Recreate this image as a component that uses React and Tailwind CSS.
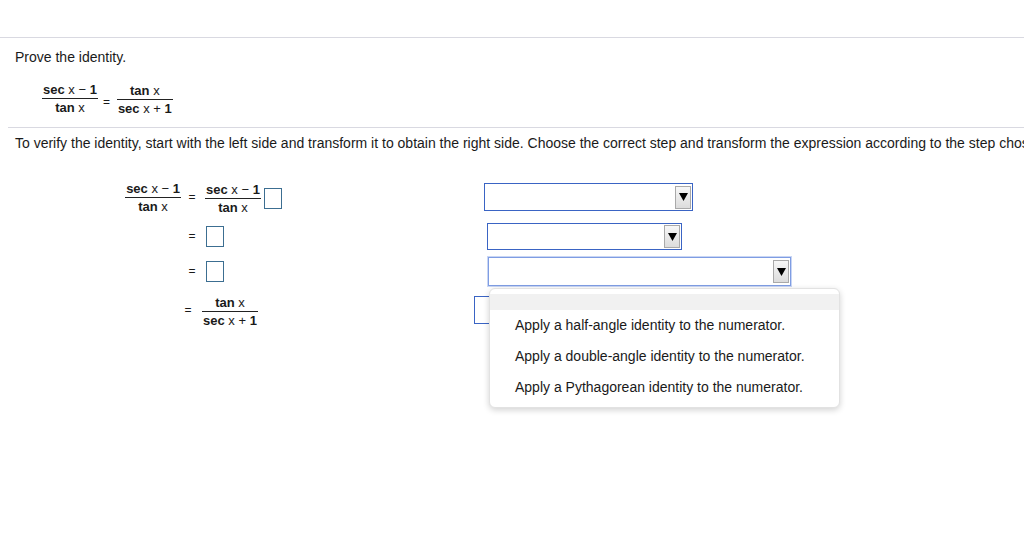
import React from "react";

const Frac = ({ num, den }) => (
  <span className="inline-flex flex-col items-center text-[13px]">
    <span className="leading-[15px] px-[1px] whitespace-nowrap">{num}</span>
    <span className="self-stretch h-px bg-[#222] my-[1px]" />
    <span className="leading-[15px] px-[1px] whitespace-nowrap">{den}</span>
  </span>
);

const SecMinus = () => (
  <>
    <b>sec</b> x − <b>1</b>
  </>
);
const SecPlus = () => (
  <>
    <b>sec</b> x + <b>1</b>
  </>
);
const Tan = () => (
  <>
    <b>tan</b> x
  </>
);

const Eq = () => <span className="w-[8px] text-center leading-[15px] text-[12px]">=</span>;

const Box = ({ className = "" }) => (
  <span className={`inline-block w-[18px] h-[21px] border border-[#3c6e91] bg-white ${className}`} />
);

const Select = ({ width, height, focused }) => (
  <div
    className={`relative bg-white flex items-center justify-end pr-[1px] ${
      focused ? "border border-[#7f9de3] shadow-[0_0_0_1px_#c9d6f4]" : "border border-[#3a64c4]"
    }`}
    style={{ width, height }}
  >
    <div className="w-[16px] h-[23px] border border-[#a9a9a9] bg-gradient-to-b from-[#f7f7f7] to-[#dcdcdc] flex items-center justify-center">
      <svg width="9" height="8" viewBox="0 0 9 8">
        <path d="M0 0 H9 L4.5 8 Z" fill="#000" />
      </svg>
    </div>
  </div>
);

export default function App() {
  const options = [
    "Apply a half-angle identity to the numerator.",
    "Apply a double-angle identity to the numerator.",
    "Apply a Pythagorean identity to the numerator.",
  ];

  return (
    <div className="relative w-[1024px] h-[557px] overflow-hidden bg-white font-['Liberation_Sans',Arial,sans-serif] text-[14px] text-[#1a1a1a]">
      {/* header strip */}
      <div className="h-[38px] border-b border-[#d9d9e1]" />

      {/* problem statement */}
      <div className="pl-[15px]">
        <p className="mt-[11px] leading-[16px]">Prove the identity.</p>
        <div className="mt-[15px] ml-[27px] flex items-center">
          <Frac num={<SecMinus />} den={<Tan />} />
          <span className="ml-[5px] mt-[8px] text-[12px] leading-[15px]">=</span>
          <span className="ml-[7px]">
            <Frac num={<Tan />} den={<SecPlus />} />
          </span>
        </div>
      </div>

      <div className="ml-[8px] mt-[11px] border-t border-[#d9d9e1]" />

      {/* the reference clips this line at the right edge */}
      <p className="mt-[7px] pl-[15px] leading-[16px] whitespace-nowrap">
        To verify the identity, start with the left side and transform it to obtain the right side. Choose the correct
        step and transform the expression according to the step chosen.
      </p>

      {/* steps */}
      <div className="mt-[29px]">
        <div className="flex items-center h-[34px]">
          <div className="w-[484px] shrink-0 flex items-center">
            <div className="w-[188px] flex justify-end pr-[7px]">
              <Frac num={<SecMinus />} den={<Tan />} />
            </div>
            <Eq />
            <span className="ml-[9px]">
              <Frac num={<SecMinus />} den={<Tan />} />
            </span>
            <Box className="ml-[3px] mt-[3px]" />
          </div>
          <Select width={209} height={28} />
        </div>

        <div className="flex items-center h-[27px] mt-[9px]">
          <div className="w-[487px] shrink-0 flex items-center">
            <div className="w-[188px]" />
            <Eq />
            <Box className="ml-[10px]" />
          </div>
          <Select width={195} height={27} />
        </div>

        <div className="flex items-center h-[29px] mt-[7px]">
          <div className="w-[488px] shrink-0 flex items-center">
            <div className="w-[188px]" />
            <Eq />
            <Box className="ml-[10px]" />
          </div>
          <Select width={303} height={29} focused />
        </div>

        <div className="flex items-center h-[32px] mt-[8px]">
          <div className="w-[474px] shrink-0 flex items-center">
            <div className="w-[184px]" />
            <Eq />
            <span className="ml-[10px]">
              <Frac num={<Tan />} den={<SecPlus />} />
            </span>
          </div>
          <Select width={209} height={28} />
        </div>
      </div>

      {/* open dropdown menu */}
      <div className="absolute left-[489px] top-[288px] w-[351px] h-[120px] bg-white rounded-[6px] border border-[#e2e2e2] shadow-[0_2px_6px_rgba(0,0,0,0.18)] pt-[5px]">
        <div className="h-[16px] bg-[#f1f1f1]" />
        {options.map((o) => (
          <div key={o} className="h-[31px] flex items-center pl-[25px] whitespace-nowrap">
            {o}
          </div>
        ))}
      </div>
    </div>
  );
}
